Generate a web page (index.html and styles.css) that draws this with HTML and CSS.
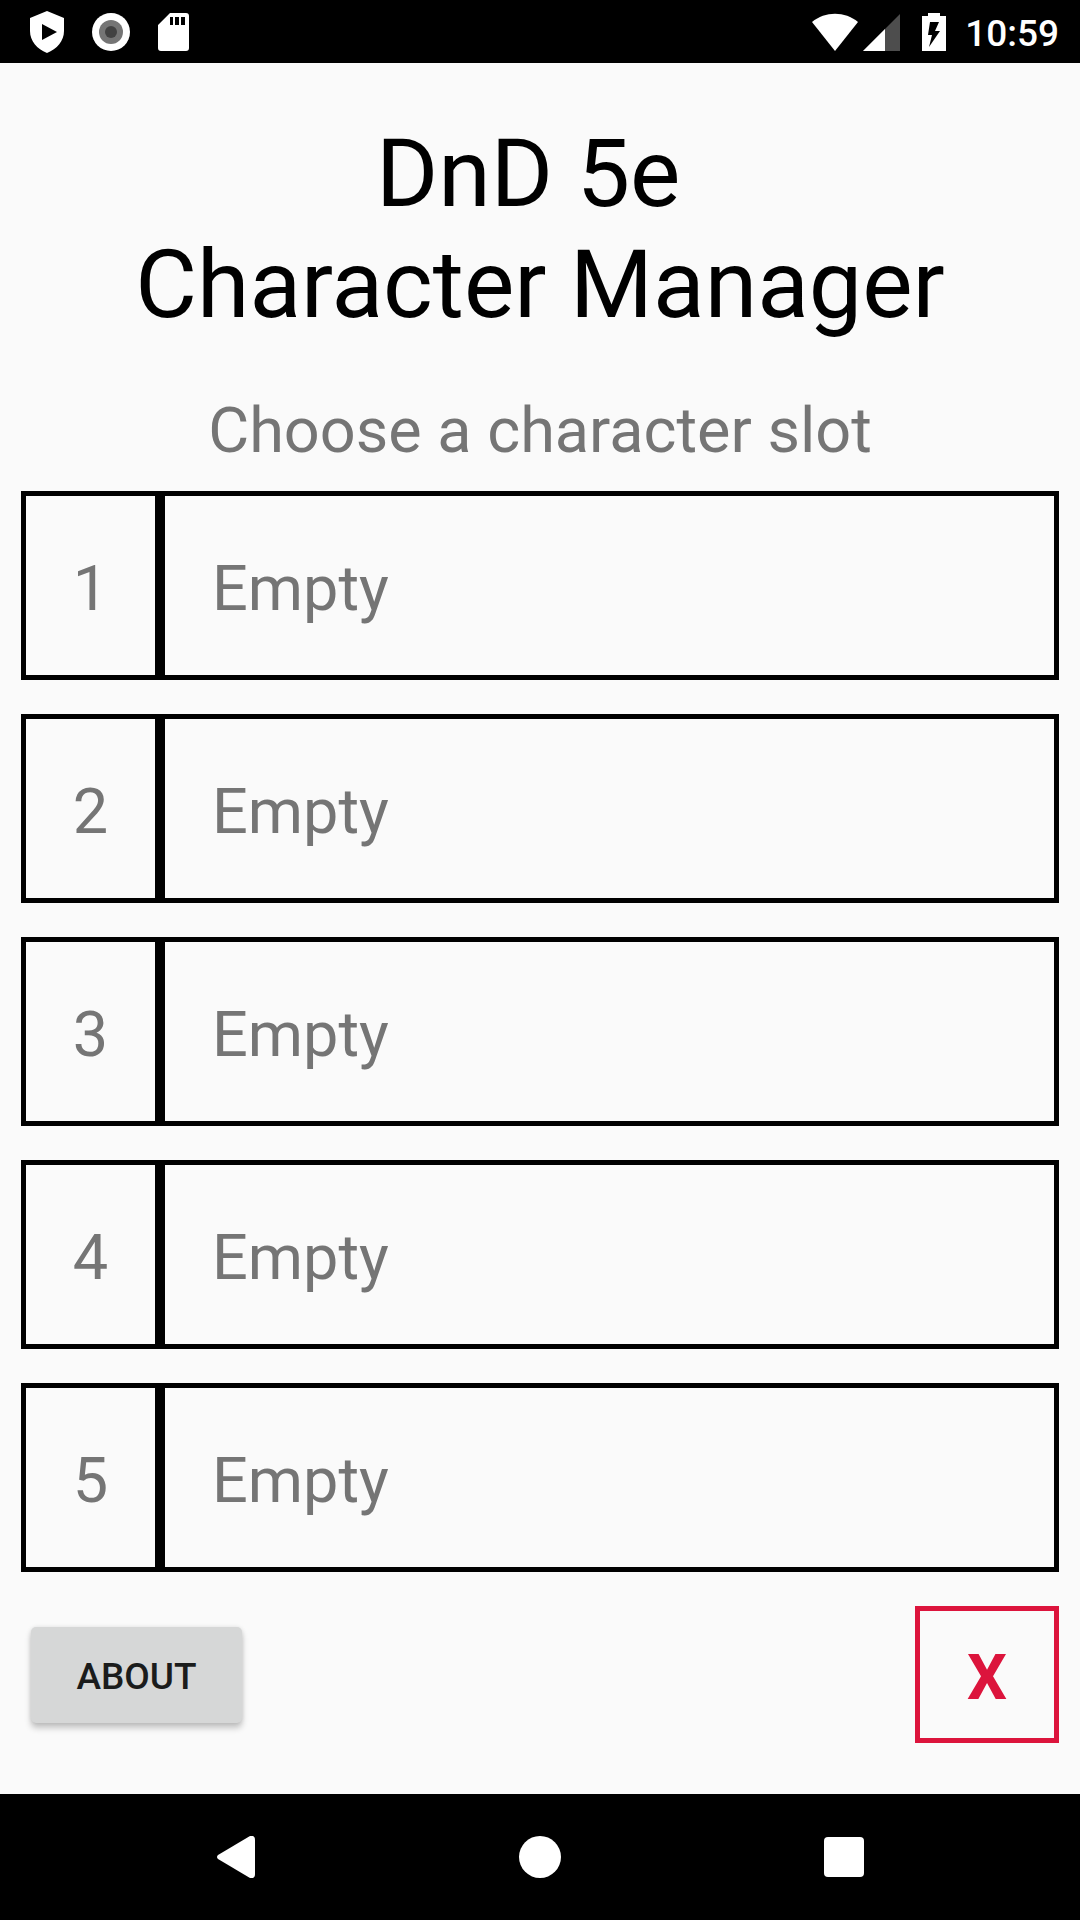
FILE: index.html
```html
<!DOCTYPE html>
<html lang="en">
<head>
    <meta charset="UTF-8">
    <meta name="viewport" content="width=device-width, initial-scale=1.0">
    <title>DnD 5e Character Manager</title>
    <link rel="stylesheet" href="styles.css">
</head>
<body>
    <header class="status-bar">
        <div class="notifications">
            <svg width="34" height="42" viewBox="0 0 34 42">
                <path fill="#fff" fill-rule="evenodd" d="M17 0L34 7V20C34 30 27 38 17 42C7 38 0 30 0 20V7ZM12 13V29L27 21Z"/>
            </svg>
            <svg width="38" height="38" viewBox="0 0 38 38">
                <circle cx="19" cy="19" r="19" fill="#fff"/>
                <circle cx="19" cy="19" r="12" fill="#757575"/>
                <circle cx="19" cy="19" r="6" fill="#424242"/>
            </svg>
            <svg width="31" height="38" viewBox="0 0 31 38">
                <path fill="#fff" fill-rule="evenodd" d="M12 0H28Q31 0 31 3V35Q31 38 28 38H3Q0 38 0 35V12ZM12 4V12H15V4ZM17 4V12H21V4ZM23 4V12H27V4Z"/>
            </svg>
        </div>
        <div class="system">
            <svg class="wifi" width="46" height="38" viewBox="0 0 46 38">
                <path fill="#fff" d="M23 38L0 9C13-2 33-2 46 9Z"/>
            </svg>
            <svg class="signal" width="37" height="38" viewBox="0 0 37 38">
                <path fill="#4d4d4d" d="M37 1V38H0Z"/>
                <path fill="#fff" d="M22 16V38H0Z"/>
            </svg>
            <svg class="battery" width="24" height="38" viewBox="0 0 24 38">
                <path fill="#fff" fill-rule="evenodd" d="M6 0H18V3H24V38H0V3H6ZM8 9L6 22H10L7 34L18 18H13L17 9Z"/>
            </svg>
            <span class="clock">10:59</span>
        </div>
    </header>

    <main class="content">
        <h1 class="title">DnD 5e&nbsp;<br>Character Manager</h1>
        <p class="subtitle">Choose a character slot</p>

        <div class="slots">
            <button class="slot" type="button">
                <span class="slot-number">1</span>
                <span class="slot-name">Empty</span>
            </button>
            <button class="slot" type="button">
                <span class="slot-number">2</span>
                <span class="slot-name">Empty</span>
            </button>
            <button class="slot" type="button">
                <span class="slot-number">3</span>
                <span class="slot-name">Empty</span>
            </button>
            <button class="slot" type="button">
                <span class="slot-number">4</span>
                <span class="slot-name">Empty</span>
            </button>
            <button class="slot" type="button">
                <span class="slot-number">5</span>
                <span class="slot-name">Empty</span>
            </button>
        </div>

        <div class="actions">
            <button class="btn-about" type="button">ABOUT</button>
            <button class="btn-delete" type="button">X</button>
        </div>
    </main>

    <nav class="nav-bar">
        <button class="nav-btn" type="button" aria-label="Back">
            <svg width="38" height="42" viewBox="0 0 38 42">
                <path fill="#fff" d="M1 19L33 0Q38-1 38 4V38Q38 43 33 42L1 23Q-1 21 1 19Z"/>
            </svg>
        </button>
        <button class="nav-btn" type="button" aria-label="Home">
            <svg width="42" height="42" viewBox="0 0 42 42">
                <circle cx="21" cy="21" r="21" fill="#fff"/>
            </svg>
        </button>
        <button class="nav-btn" type="button" aria-label="Recent apps">
            <svg width="40" height="40" viewBox="0 0 40 40">
                <rect width="40" height="40" rx="4" fill="#fff"/>
            </svg>
        </button>
    </nav>
</body>
</html>
```

FILE: styles.css
```css
* {
    box-sizing: border-box;
}
body {
    margin: 0;
    min-height: 100vh;
    display: flex;
    flex-direction: column;
    font-family: Roboto, "Liberation Sans", sans-serif;
    background: #fafafa;
    color: #000;
}
button {
    font-family: inherit;
    margin: 0;
    padding: 0;
    border: none;
    background: none;
    cursor: pointer;
}
svg {
    display: block;
}

/* Status bar */
.status-bar {
    display: flex;
    justify-content: space-between;
    align-items: center;
    height: 63px;
    padding: 0 21px 0 30px;
    background: #000;
}
.notifications {
    display: flex;
    align-items: center;
    gap: 28px;
}
.system {
    display: flex;
    align-items: center;
}
.signal {
    margin-left: 5px;
}
.battery {
    margin-left: 22px;
}
.clock {
    margin-left: 19px;
    padding-top: 3px;
    font-size: 37px;
    font-weight: 500;
    line-height: 43px;
    color: #fff;
}

/* Character slots */
.content {
    flex: 1;
    padding: 55px 21px 51px;
}
.title {
    margin: 0 0 54px;
    font-size: 95px;
    font-weight: 400;
    line-height: 111px;
    text-align: center;
}
.subtitle {
    margin: 0 0 23px;
    font-size: 63px;
    line-height: 74px;
    text-align: center;
    color: #757575;
}
.slots {
    display: flex;
    flex-direction: column;
    gap: 34px;
}
.slot {
    display: flex;
    width: 100%;
    font-size: 63px;
    line-height: 74px;
    text-align: left;
    color: #757575;
}
.slot-number,
.slot-name {
    border: 5px solid #000;
    padding: 56px 0 49px;
}
.slot-number {
    width: 139px;
    text-align: center;
}
.slot-name {
    flex: 1;
    padding-left: 47px;
}

/* Bottom buttons */
.actions {
    display: flex;
    justify-content: space-between;
    align-items: center;
    margin-top: 34px;
    padding-left: 10px;
}
.btn-about {
    width: 211px;
    height: 96px;
    padding-top: 4px;
    border-radius: 5px;
    background: #d6d7d7;
    box-shadow: 0 5px 6px rgba(0, 0, 0, 0.22), 0 0 4px rgba(0, 0, 0, 0.1);
    font-size: 37px;
    font-weight: 500;
    color: #1b1c1c;
}
.btn-delete {
    width: 144px;
    height: 137px;
    padding-top: 7px;
    border: 5px solid #dc143c;
    font-size: 63px;
    font-weight: 700;
    line-height: 74px;
    color: #dc143c;
}

/* Navigation bar */
.nav-bar {
    display: grid;
    grid-template-columns: repeat(3, 1fr);
    height: 126px;
    padding: 0 84px;
    background: #000;
}
.nav-btn {
    display: flex;
    justify-content: center;
    align-items: center;
}
```
